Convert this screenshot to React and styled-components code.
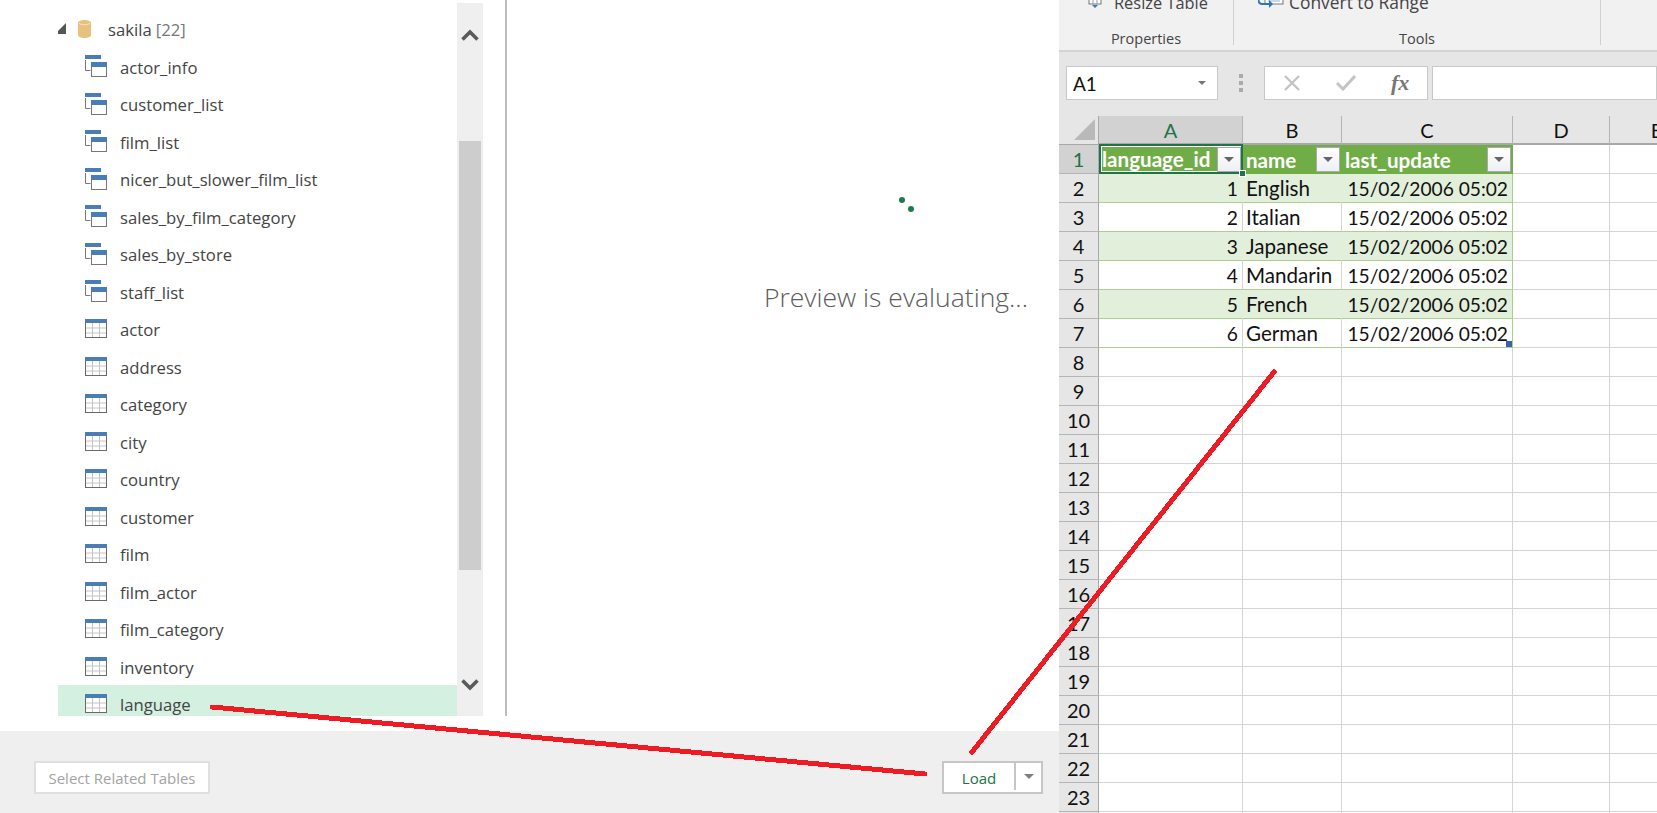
import React from "react";
import styled, { createGlobalStyle } from "styled-components";

const GlobalStyle = createGlobalStyle`
  html, body {
    margin: 0;
    padding: 0;
    background: #fff;
  }
`;

const Screen = styled.div`
  position: relative;
  display: flex;
  width: 1657px;
  height: 813px;
  overflow: hidden;
  background: #fff;
`;

/* left: navigator dialog */
const Navigator = styled.div`
  display: flex;
  flex-direction: column;
  width: 1059px;
  flex: none;
  font-family: "Open Sans", sans-serif;
`;

const NavBody = styled.div`
  display: flex;
  height: 716px;
  flex: none;
`;

const Tree = styled.div`
  width: 399px;
  margin-left: 58px;
  padding-top: 10px;
  height: 706px;
  overflow: hidden;
  flex: none;
`;

const TreeRow = styled.div`
  display: flex;
  align-items: center;
  height: 37.5px;
  padding-left: ${({ $root }) => ($root ? "0" : "27px")};
  background: ${({ $selected }) => ($selected ? "#d3f0e0" : "transparent")};
  color: #444;
  font-size: 16.7px;
  white-space: nowrap;
`;

const RowName = styled.span`
  padding-top: 2px;
  margin-left: ${({ $gap }) => $gap || 0}px;
`;

const RowIcon = styled.svg`
  flex: none;
  margin-right: 13px;
`;

const ExpandIcon = styled.svg`
  flex: none;
  margin: 0 12px 0 -3px;
`;

const Muted = styled.span`
  color: #777;
  margin-left: 4px;
  padding-top: 2px;
`;

const Scrollbar = styled.div`
  display: flex;
  flex-direction: column;
  align-items: center;
  width: 26px;
  margin-top: 3px;
  background: #efefef;
  flex: none;
`;

const ScrollEnd = styled.div`
  display: flex;
  justify-content: center;
  align-items: ${({ $down }) => ($down ? "flex-end" : "flex-start")};
  width: 100%;
  height: ${({ $down }) => ($down ? "146px" : "138px")};
  padding: ${({ $down }) => ($down ? "0 0 25px" : "26px 0 0")};
  box-sizing: border-box;
`;

const ScrollThumb = styled.div`
  width: 22px;
  height: 429px;
  background: #cdcdcd;
  flex: none;
`;

const Divider = styled.div`
  width: 2px;
  margin-left: 22px;
  background: #bdbdbd;
  flex: none;
`;

const Preview = styled.div`
  flex: 1;
  display: flex;
  flex-direction: column;
  align-items: center;
  padding: 197px 0 0 226px;
`;

const Spinner = styled.svg`
  margin-left: 21px;
`;

const PreviewText = styled.div`
  margin-top: 67px;
  font-size: 26.5px;
  line-height: 34px;
  font-weight: 300;
  color: #5c5c5c;
  white-space: nowrap;
`;

const Footer = styled.div`
  display: flex;
  justify-content: space-between;
  align-items: flex-start;
  margin-top: 15px;
  padding: 30px 16px 0 34px;
  flex: 1;
  background: #efefef;
`;

const GhostButton = styled.div`
  display: flex;
  align-items: center;
  justify-content: center;
  box-sizing: border-box;
  width: 176px;
  height: 33px;
  padding-top: 1px;
  border: 2px solid #e0e0e0;
  background: #fff;
  color: #a3a3a3;
  font-size: 15px;
`;

const SplitButton = styled.div`
  display: flex;
  box-sizing: border-box;
  width: 101px;
  height: 33px;
  border: 2px solid #c6c6c6;
  background: #fff;
`;

const LoadLabel = styled.div`
  flex: 1;
  display: flex;
  align-items: center;
  justify-content: center;
  padding-top: 1px;
  color: #217346;
  font-size: 15px;
`;

const LoadCaret = styled.div`
  display: flex;
  align-items: center;
  justify-content: center;
  width: 25px;
  border-left: 2px solid #c6c6c6;
  margin-bottom: 2px;
`;

const CaretDown = styled.span`
  width: 0;
  height: 0;
  border-left: ${({ $size }) => $size}px solid transparent;
  border-right: ${({ $size }) => $size}px solid transparent;
  border-top: ${({ $size }) => $size}px solid ${({ $color }) => $color};
`;

/* right: excel */
const Sheet = styled.div`
  flex: 1;
  display: flex;
  flex-direction: column;
  background: #e6e6e6;
  font-family: "Lato", "Liberation Sans", sans-serif;
  color: #111;
  min-width: 0;
  overflow: hidden;
`;

const Ribbon = styled.div`
  display: flex;
  height: 50px;
  flex: none;
  background: #f1f1f1;
  border-bottom: 2px solid #d4d4d4;
  overflow: hidden;
`;

const RibbonGroup = styled.div`
  width: ${({ $w }) => $w}px;
  flex: none;
  height: 45px;
  display: flex;
  flex-direction: column;
  justify-content: flex-end;
  align-items: center;
  border-right: 1px solid #d0d0d0;
  font-family: "Open Sans", sans-serif;
`;

const RibbonItems = styled.div`
  display: flex;
  align-items: center;
  gap: ${({ $gap }) => $gap}px;
  width: 100%;
  box-sizing: border-box;
  height: 20px;
  padding-left: ${({ $pad }) => $pad}px;
  font-size: ${({ $size }) => $size}px;
  color: #444;
  white-space: nowrap;
`;

const GroupLabel = styled.div`
  height: 12px;
  margin-top: 21px;
  line-height: 12px;
  font-size: 14.5px;
  color: #444;
`;

const FormulaBar = styled.div`
  display: flex;
  align-items: stretch;
  height: 34px;
  margin-top: 14px;
  padding-left: 7px;
  flex: none;
`;

const FieldBox = styled.div`
  box-sizing: border-box;
  display: flex;
  align-items: center;
  background: #fff;
  border: 1px solid #c9c9c9;
  width: ${({ $w }) => ($w ? `${$w}px` : "auto")};
  flex: ${({ $w }) => ($w ? "none" : "1")};
  margin-left: ${({ $gap }) => $gap || 0}px;
`;

const NameText = styled.span`
  flex: 1;
  padding-left: 6px;
  font-size: 19px;
`;

const NameCaret = styled.span`
  display: flex;
  margin-right: 11px;
`;

const GripDots = styled.div`
  display: flex;
  flex-direction: column;
  justify-content: center;
  gap: 3px;
  width: 4px;
  margin: 0 21px;
  i {
    display: block;
    width: 4px;
    height: 4px;
    background: #aaa;
  }
`;

const FormulaTools = styled.div`
  display: flex;
  align-items: center;
  gap: 35px;
  padding-left: 18px;
`;

const FxGlyph = styled.span`
  font-family: "Liberation Serif", serif;
  font-style: italic;
  font-weight: 700;
  font-size: 22px;
  color: #777;
`;

const Grid = styled.div`
  display: grid;
  grid-template-columns: 40px 144px 99px 171px 97px 94px;
  grid-template-rows: repeat(24, 29px);
  margin-top: 16px;
  flex: none;
`;

const Corner = styled.div`
  display: flex;
  justify-content: flex-end;
  align-items: flex-end;
  padding: 0 3px 4px 0;
  border-right: 1px solid #a8a8a8;
  border-bottom: 1px solid #a8a8a8;
  svg { display: block; }
`;

const ColHead = styled.div`
  display: flex;
  align-items: center;
  justify-content: center;
  box-sizing: border-box;
  background: ${({ $active }) => ($active ? "#d2d2d2" : "#e6e6e6")};
  color: ${({ $active }) => ($active ? "#217346" : "#111")};
  border-right: 1px solid #b4b4b4;
  border-bottom: 2px solid #a8a8a8;
  font-size: 20px;
`;

const RowHead = styled.div`
  display: flex;
  align-items: center;
  justify-content: center;
  box-sizing: border-box;
  background: ${({ $active }) => ($active ? "#d2d2d2" : "#e6e6e6")};
  color: ${({ $active }) => ($active ? "#217346" : "#111")};
  border-right: 1px solid #a8a8a8;
  border-bottom: 1px solid #b4b4b4;
  font-size: 20px;
`;

const Cell = styled.div`
  position: relative;
  display: flex;
  align-items: center;
  box-sizing: border-box;
  padding: 0 4px 0 3px;
  justify-content: ${({ $right }) => ($right ? "flex-end" : "flex-start")};
  background: ${({ $stripe }) => ($stripe ? "#e2efda" : "#fff")};
  border-bottom: 1px solid ${({ $inTable }) => ($inTable ? "#a9d08e" : "#d4d4d4")};
  border-right: 1px solid ${({ $stripe, $edge }) =>
    $edge ? "#a9d08e" : $stripe ? "#e2efda" : "#d4d4d4"};
  font-size: ${({ $right }) => ($right ? "19.2px" : "20.6px")};
  white-space: nowrap;
`;

const HeadCell = styled.div`
  position: relative;
  display: flex;
  align-items: center;
  justify-content: space-between;
  box-sizing: border-box;
  padding: 0 2px 0 3px;
  background: #70ad47;
  color: #fff;
  font-size: 20.6px;
  font-weight: 700;
  white-space: nowrap;
  ${({ $selected }) =>
    $selected &&
    `
    box-shadow: inset 0 0 0 2px #217346, inset 0 0 0 3px #fff;
    margin-top: -1px;
    z-index: 1;
  `}
`;

const FilterButton = styled.div`
  display: flex;
  align-items: center;
  justify-content: center;
  box-sizing: border-box;
  width: 24px;
  height: 25px;
  flex: none;
  background: linear-gradient(#fff, #eef0f5);
  border: 1px solid #a9a9b0;
`;

const SelectionHandle = styled.span`
  position: absolute;
  right: -3px;
  bottom: -3px;
  width: 7px;
  height: 7px;
  background: #217346;
  border: 1px solid #fff;
  box-sizing: border-box;
  z-index: 2;
`;

const TableResize = styled.span`
  position: absolute;
  right: 0;
  bottom: 0;
  width: 6px;
  height: 6px;
  background: #3f5fae;
`;

const Annotations = styled.svg`
  position: absolute;
  left: 0;
  top: 0;
  pointer-events: none;
`;

const ViewIcon = () => (
  <RowIcon width="22" height="22" viewBox="0 0 22 22">
    <path d="M.5 5v10.5h5" fill="none" stroke="#777" />
    <rect x="0" y="0" width="16" height="4" fill="#4a7db5" />
    <rect x="6.5" y="7.5" width="15" height="14" fill="#fff" stroke="#777" />
    <rect x="6" y="7" width="16" height="5" fill="#4a7db5" />
  </RowIcon>
);

const TableIcon = () => (
  <RowIcon width="22" height="19" viewBox="0 0 22 19">
    <rect x=".5" y=".5" width="21" height="18" fill="#fff" stroke="#6a6a6a" />
    <path d="M1 9h20M1 14h20M7.5 4v14M14.5 4v14" stroke="#c4c4c4" fill="none" />
    <rect x="0" y="0" width="22" height="4" fill="#4a7db5" />
  </RowIcon>
);

const Chevron = ({ down }) => (
  <svg width="18" height="13" viewBox="0 0 18 13">
    <path
      d={down ? "M1.5 2.5 9 10l7.5-7.5" : "M1.5 10.5 9 3l7.5 7.5"}
      fill="none"
      stroke="#5a5a5a"
      strokeWidth="3.6"
    />
  </svg>
);

const views = [
  "actor_info",
  "customer_list",
  "film_list",
  "nicer_but_slower_film_list",
  "sales_by_film_category",
  "sales_by_store",
  "staff_list",
];

const tables = [
  "actor",
  "address",
  "category",
  "city",
  "country",
  "customer",
  "film",
  "film_actor",
  "film_category",
  "inventory",
  "language",
];

const languages = ["English", "Italian", "Japanese", "Mandarin", "French", "German"];
const columns = ["A", "B", "C", "D", "E"];
const updated = "15/02/2006 05:02";

const Caret = () => <CaretDown $size={5} $color="#666" />;

const App = () => {
  const blankRows = Array.from({ length: 17 }, (_, i) => i + 8);

  return (
    <Screen>
      <GlobalStyle />
      <Navigator>
        <NavBody>
          <Tree>
            <TreeRow $root>
              <ExpandIcon width="11" height="11" viewBox="0 0 11 11">
                <path d="M11 0v11H0z" fill="#555" />
              </ExpandIcon>
              <RowIcon width="13" height="18" viewBox="0 0 13 18">
                <path d="M0 3c0-4 13-4 13 0v12c0 4-13 4-13 0z" fill="#e8c17f" />
                <path d="M1 3.5c2 1.6 9 1.6 11 0" fill="none" stroke="#f6e4c2" />
              </RowIcon>
              <RowName $gap={4}>sakila</RowName>
              <Muted>[22]</Muted>
            </TreeRow>
            {views.map((name) => (
              <TreeRow key={name}>
                <ViewIcon />
                <RowName>{name}</RowName>
              </TreeRow>
            ))}
            {tables.map((name) => (
              <TreeRow key={name} $selected={name === "language"}>
                <TableIcon />
                <RowName>{name}</RowName>
              </TreeRow>
            ))}
          </Tree>
          <Scrollbar>
            <ScrollEnd>
              <Chevron />
            </ScrollEnd>
            <ScrollThumb />
            <ScrollEnd $down>
              <Chevron down />
            </ScrollEnd>
          </Scrollbar>
          <Divider />
          <Preview>
            <Spinner width="16" height="16" viewBox="0 0 16 16">
              <circle cx="3" cy="3" r="3" fill="#1f7a4d" />
              <circle cx="12" cy="12" r="3" fill="#1f7a4d" />
            </Spinner>
            <PreviewText>Preview is evaluating...</PreviewText>
          </Preview>
        </NavBody>
        <Footer>
          <GhostButton>Select Related Tables</GhostButton>
          <SplitButton>
            <LoadLabel>Load</LoadLabel>
            <LoadCaret>
              <CaretDown $size={5} $color="#808080" />
            </LoadCaret>
          </SplitButton>
        </Footer>
      </Navigator>

      <Sheet>
        <Ribbon>
          <RibbonGroup $w={174}>
            <RibbonItems $pad={25} $gap={8} $size={16.4}>
              <svg width="22" height="14" viewBox="0 0 22 14">
                <rect x="5" y="-2" width="12" height="11" fill="#fff" stroke="#777" />
                <path d="M9 -2v11M13 -2v11M5 4h12" stroke="#999" />
                <path d="M0 3l3-2v4zM22 3l-3-2v4zM8 10h6l-3 3z" fill="#3f77b3" />
              </svg>
              Resize Table
            </RibbonItems>
            <GroupLabel>Properties</GroupLabel>
          </RibbonGroup>
          <RibbonGroup $w={366}>
            <RibbonItems $pad={24} $gap={5} $size={17.4}>
              <svg width="26" height="16" viewBox="0 0 26 16">
                <rect x="7" y="1" width="18" height="9" fill="#fff" stroke="#777" />
                <path d="M10 4h12M10 7h12" stroke="#8fb1d6" />
                <path d="M8 3H4a3 3 0 0 0 0 7h9" fill="none" stroke="#2f75b5" strokeWidth="2" />
                <path d="M11 6l4 4-4 4z" fill="#2f75b5" />
              </svg>
              Convert to Range
            </RibbonItems>
            <GroupLabel>Tools</GroupLabel>
          </RibbonGroup>
        </Ribbon>

        <FormulaBar>
          <FieldBox $w={152}>
            <NameText>A1</NameText>
            <NameCaret>
              <CaretDown $size={4} $color="#777" />
            </NameCaret>
          </FieldBox>
          <GripDots>
            <i />
            <i />
            <i />
          </GripDots>
          <FieldBox $w={164}>
            <FormulaTools>
              <svg width="18" height="16" viewBox="0 0 18 16">
                <path d="M2 1l14 14M16 1 2 15" stroke="#c4c4c4" strokeWidth="2.4" fill="none" />
              </svg>
              <svg width="20" height="16" viewBox="0 0 20 16">
                <path d="M1 8l6 6L19 1" stroke="#c4c4c4" strokeWidth="3" fill="none" />
              </svg>
              <FxGlyph>fx</FxGlyph>
            </FormulaTools>
          </FieldBox>
          <FieldBox $gap={4} />
        </FormulaBar>

        <Grid>
          <Corner>
            <svg width="21" height="21" viewBox="0 0 21 21">
              <path d="M21 0v21H0z" fill="#b9b9b9" />
            </svg>
          </Corner>
          {columns.map((col) => (
            <ColHead key={col} $active={col === "A"}>
              {col}
            </ColHead>
          ))}

          <RowHead $active>1</RowHead>
          <HeadCell $selected>
            language_id
            <FilterButton>
              <Caret />
            </FilterButton>
            <SelectionHandle />
          </HeadCell>
          <HeadCell>
            name
            <FilterButton>
              <Caret />
            </FilterButton>
          </HeadCell>
          <HeadCell>
            last_update
            <FilterButton>
              <Caret />
            </FilterButton>
          </HeadCell>
          <Cell />
          <Cell />

          {languages.map((lang, i) => {
            const stripe = i % 2 === 0;
            return (
              <React.Fragment key={lang}>
                <RowHead>{i + 2}</RowHead>
                <Cell $right $stripe={stripe} $inTable>
                  {i + 1}
                </Cell>
                <Cell $stripe={stripe} $inTable>
                  {lang}
                </Cell>
                <Cell $right $stripe={stripe} $inTable $edge>
                  {updated}
                  {i === 5 && <TableResize />}
                </Cell>
                <Cell />
                <Cell />
              </React.Fragment>
            );
          })}

          {blankRows.map((row) => (
            <React.Fragment key={row}>
              <RowHead>{row}</RowHead>
              <Cell />
              <Cell />
              <Cell />
              <Cell />
              <Cell />
            </React.Fragment>
          ))}
        </Grid>
      </Sheet>

      <Annotations width="1657" height="813" viewBox="0 0 1657 813">
        <path d="M212 707 925 774" stroke="#ed1c24" strokeWidth="5" strokeLinecap="round" fill="none" shapeRendering="crispEdges" />
        <path d="M972 752 1274 372" stroke="#ed1c24" strokeWidth="5" strokeLinecap="round" fill="none" shapeRendering="crispEdges" />
      </Annotations>
    </Screen>
  );
};

export default App;
